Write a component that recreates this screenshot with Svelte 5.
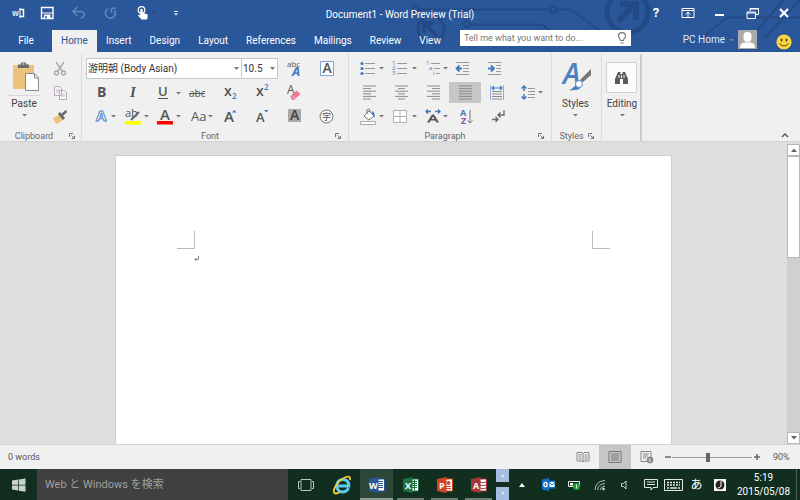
<script>
    const tabs = ["Home", "Insert", "Design", "Layout", "References", "Mailings", "Review", "View"];
    let activeTab = $state("Home");
    let search = $state("");
    let webSearch = $state("");
    let zoom = $state(90);
    let align = $state("justify");

    const apps = [
        { name: "Word", letter: "W", color: "#2b579a", active: true },
        { name: "Excel", letter: "X", color: "#1f7246" },
        { name: "PowerPoint", letter: "P", color: "#d24625" },
        { name: "Access", letter: "A", color: "#a4373a" },
    ];
</script>

{#snippet caret(x, y)}
    <path class="caret" d="M{x - 2} {y - 1}h5l-2.5 2.6z" />
{/snippet}

{#snippet launcher(label)}
    <button class="launcher" aria-label={label}>
        <svg width="6" height="6" viewBox="0 0 6 6"><path d="M.5 4V.5H4M2.3 2.3l3 3M5.5 2.8v2.7H2.8" fill="none" stroke="#777" /></svg>
    </button>
{/snippet}

{#snippet lines(x, y, widths, mode)}
    {#each widths as w, i}
        <path d="M{mode === 'right' ? x + 13 - w : mode === 'center' ? x + (13 - w) / 2 : x} {y + i * 2.6}h{w}" stroke="#8a8a8a" />
    {/each}
{/snippet}

<div class="window">
    <header>
        <svg class="circuit" width="400" height="52" viewBox="400 0 400 52" fill="none" stroke="#234a85">
            <g stroke-width="2">
                <circle cx="415.500" cy="9" r="3" />
                <path d="M419 9.500h131M557 9.500h14l30 22" />
                <circle cx="553.500" cy="9.500" r="3" />
                <circle cx="467" cy="24" r="3" />
                <path d="M470 24.500h72l8 6M700 40l27-22.500h73M757 31l26-31M765 38l35-38" />
            </g>
            <circle cx="431" cy="29" r="13" stroke-width="3" />
            <path d="M437 36l-12-12M424 33v-10h10" stroke-width="3.500" />
            <circle cx="627.500" cy="12" r="20.500" stroke-width="5" />
            <path d="M618 21l17-17M620 4h16v16" stroke-width="5.500" />
        </svg>

        <div class="titlebar">
            <div class="quick">
                <svg width="30" height="26" viewBox="0 0 30 26">
                    <path d="M16.500 9.500h4v7h-4" fill="none" stroke="#fff" stroke-width="1.500" />
                    <text x="9" y="16" font-size="8" font-weight="700" fill="#dfe8f5">w</text>
                    <path d="M17 8v10" stroke="#fff" />
                </svg>
                <button aria-label="Save">
                    <svg width="30" height="26" viewBox="0 0 30 26">
                        <path d="M8.500 7.500h11.500v11H8.500z" fill="none" stroke="#fff" stroke-width="1.400" />
                        <path d="M8.500 12.500h11.500v1H8.500zM11 14.500h6.500v4h-6.500z" fill="#fff" />
                        <path d="M13 16v2.500" stroke="#2a579a" stroke-width="1.500" />
                    </svg>
                </button>
                <button aria-label="Undo">
                    <svg width="32" height="26" viewBox="0 0 32 26" fill="none" stroke="#5f83ba" stroke-width="1.600">
                        <path d="M14.500 7l-4.500 4.500 4.500 4.500M10.500 11.500h7c5 0 5 6 0 6.500" />
                    </svg>
                </button>
                <button aria-label="Redo">
                    <svg width="32" height="26" viewBox="0 0 32 26" fill="none" stroke="#5f83ba" stroke-width="1.600">
                        <path d="M13 8.700a5 5 0 1 0 6.500 1.500M21 8.300h-4.500v4.500" />
                    </svg>
                </button>
                <button aria-label="Touch mode">
                    <svg width="32" height="26" viewBox="0 0 32 26">
                        <circle cx="14.500" cy="10" r="3.300" fill="none" stroke="#fff" stroke-width="1.200" />
                        <path d="M13.300 9.500q1.200-1.500 2.400 0V13l4 1q1.500.5 1 2.500l-.7 3h-5.500l-3.500-4q.5-1.200 2.300-.3z" fill="#fff" />
                        <path d="M25 12h4l-2 2z" fill="#37404f" />
                    </svg>
                </button>
                <button aria-label="Customize Quick Access Toolbar">
                    <svg width="32" height="26" viewBox="0 0 32 26">
                        <path d="M15 11.500h4" stroke="#fff" />
                        <path d="M15 13.500h4l-2 2z" fill="#fff" />
                    </svg>
                </button>
            </div>
            <div class="title">Document1 - Word Preview (Trial)</div>
            <div class="controls">
                <button aria-label="Help" class="help">?</button>
                <button aria-label="Ribbon Display Options">
                    <svg width="14" height="12" viewBox="0 0 14 12" fill="none" stroke="#fff">
                        <path d="M1 1.500h12v9H1zM1 3.500h12M7 10V5M4.500 7.500L7 5l2.500 2.500" />
                    </svg>
                </button>
                <button aria-label="Minimize">
                    <svg width="12" height="12" viewBox="0 0 12 12"><path d="M1 8h9" stroke="#fff" stroke-width="2" /></svg>
                </button>
                <button aria-label="Restore">
                    <svg width="13" height="13" viewBox="0 0 13 13" fill="none" stroke="#fff">
                        <path d="M4 4V1.500h8.500v6H10M1 5h8.500v6.500H1zM1 6h8.500M4 2h8.500" />
                    </svg>
                </button>
                <button aria-label="Close">
                    <svg width="12" height="12" viewBox="0 0 12 12"><path d="M2 2l8 8M10 2l-8 8" stroke="#fff" stroke-width="2.200" /></svg>
                </button>
            </div>
        </div>

        <div class="tabrow">
            <button class="tab file">File</button>
            {#each tabs as tab}
                <button class="tab" class:active={activeTab === tab} onclick={() => (activeTab = tab)}>{tab}</button>
            {/each}
            <label class="tell">
                <input type="text" placeholder="Tell me what you want to do..." aria-label="Tell me what you want to do" bind:value={search} />
                <svg width="10" height="12" viewBox="0 0 10 12" fill="none" stroke="#777" stroke-width="1.200">
                    <path d="M3.500 8.500C3.500 6.500 1.500 6 1.500 4a3.500 3.300 0 0 1 7 0c0 2-2 2.500-2 4.500zM3.500 11h3" />
                </svg>
            </label>
            <div class="account">
                <button class="user">
                    PC Home
                    <svg width="5" height="3" viewBox="0 0 5 3"><path d="M0 0h5L2.500 2.500z" fill="#6f83a5" /></svg>
                </button>
                <svg width="19" height="19" viewBox="0 0 19 19">
                    <path d="M0 0h19v19H0z" fill="#aaa" />
                    <rect x="5.500" y="2" width="8" height="10" rx="4" fill="#fff" />
                    <path d="M2 18q0-5 4-5.500h7q4 .5 4 5.500z" fill="#fff" />
                </svg>
                <button class="smile" aria-label="Send feedback">
                    <svg width="16" height="16" viewBox="0 0 16 16">
                        <circle cx="8" cy="8" r="7.600" fill="#fbd640" />
                        <ellipse cx="5.500" cy="6" rx="1" ry="1.600" fill="#4c4320" />
                        <ellipse cx="10.500" cy="6" rx="1" ry="1.600" fill="#4c4320" />
                        <path d="M3.500 9.500q4.500 5 9 0" fill="none" stroke="#4c4320" />
                    </svg>
                </button>
            </div>
        </div>
    </header>

    <section class="ribbon">
        <div class="group clipboard">
            <div class="body">
                <button class="big">
                    <svg width="32" height="39" viewBox="0 0 32 39">
                        <path d="M5 7h21v24H5z" fill="#ecc37c" />
                        <path d="M10 10V6.500h3V4.500h5v2h3V10z" fill="#6a6a6a" />
                        <circle cx="15.500" cy="6" r="1" fill="#ecc37c" />
                        <path d="M17.500 15.500h9l4 4.500v12.500h-13z" fill="#fff" stroke="#8a8a8a" />
                        <path d="M26.500 15.500V20h4" fill="none" stroke="#8a8a8a" />
                        <path d="M0 37.500h32" stroke="#d6d6d6" />
                    </svg>
                    <span>Paste</span>
                    <svg width="5" height="8" viewBox="0 0 5 8"><path class="caret" d="M0 3h5L2.500 5.600z" /></svg>
                </button>
                <div class="tools one">
                    <button aria-label="Cut">
                        <svg viewBox="0 0 32 21" fill="none" stroke="#aaa" stroke-width="1.400">
                            <path d="M12 4l6.500 9.500M20 4l-6.500 9.500" />
                            <circle cx="12.500" cy="15" r="2" /><circle cx="19.500" cy="15" r="2" />
                        </svg>
                    </button>
                    <button aria-label="Copy">
                        <svg viewBox="0 0 32 21" fill="#f7f3f8" stroke="#b9a9bd">
                            <path d="M10.500 4.500h5l2 2v7h-7zM15.500 8.500h5l2 2v7h-7z" />
                            <path d="M12 8h3M12 10h3M17 12h4M17 14h4" stroke="#c9bccd" />
                        </svg>
                    </button>
                    <button aria-label="Format Painter">
                        <svg viewBox="0 0 32 21">
                            <path d="M9 12l6-3 4 5-6 4q-2-1-4-6z" fill="#ecc37c" />
                            <path d="M14 8l2-2 5 6-2 2z" fill="#666" />
                            <path d="M18 9l4.500-4" stroke="#666" stroke-width="2.500" />
                        </svg>
                    </button>
                </div>
            </div>
            <footer><span>Clipboard</span>{@render launcher("Clipboard settings")}</footer>
        </div>

        <div class="group">
            <div class="body">
                <div class="tools eight">
                    <div class="combos">
                        <select class="family" aria-label="Font"><option>游明朝 (Body Asian)</option></select>
                        <select class="size" aria-label="Font size"><option>10.5</option></select>
                    </div>
                    <button aria-label="Phonetic Guide">
                        <svg viewBox="0 0 32 21">
                            <text x="9" y="9" font-size="8" fill="#555">abc</text>
                            <text x="14" y="18" font-size="13" font-weight="700" font-style="italic" fill="#4079bd">A</text>
                        </svg>
                    </button>
                    <button aria-label="Character Border">
                        <svg viewBox="0 0 32 21">
                            <path d="M10.500 3.500h13v14h-13z" fill="#fafcff" stroke="#7fa3cf" />
                            <text x="12.500" y="15" font-size="14" font-weight="600" fill="#555">A</text>
                        </svg>
                    </button>

                    <button aria-label="Bold"><svg viewBox="0 0 32 21"><text x="11" y="15" font-size="14" font-weight="700" fill="#555">B</text></svg></button>
                    <button aria-label="Italic"><svg viewBox="0 0 32 21"><text class="serif" x="12" y="15" font-size="15" font-weight="700" font-style="italic" fill="#555">I</text></svg></button>
                    <button aria-label="Underline">
                        <svg viewBox="0 0 32 21">
                            <text x="8" y="14" font-size="13" font-weight="600" fill="#555">U</text>
                            <path d="M8 16.500h10" stroke="#555" />
                            {@render caret(28, 11)}
                        </svg>
                    </button>
                    <button aria-label="Strikethrough">
                        <svg viewBox="0 0 32 21">
                            <text x="7" y="15" font-size="10" fill="#555">abc</text>
                            <path d="M7 11.500h16" stroke="#555" />
                        </svg>
                    </button>
                    <button aria-label="Subscript">
                        <svg viewBox="0 0 32 21">
                            <text x="10" y="14" font-size="14" font-weight="600" fill="#555">x</text>
                            <text x="18" y="17" font-size="8" font-weight="600" fill="#4079bd">2</text>
                        </svg>
                    </button>
                    <button aria-label="Superscript">
                        <svg viewBox="0 0 32 21">
                            <text x="10" y="14" font-size="14" font-weight="600" fill="#555">x</text>
                            <text x="18" y="8" font-size="8" font-weight="600" fill="#4079bd">2</text>
                        </svg>
                    </button>
                    <button aria-label="Clear Formatting">
                        <svg viewBox="0 0 32 21">
                            <text x="9" y="12" font-size="12" fill="#555">A</text>
                            <path d="M12 14.500l6.500-6 4 3.500-6.500 6h-1.500z" fill="#e8798f" />
                            <path d="M13.500 13l4 3.800" stroke="#f6c5ce" />
                        </svg>
                    </button>
                    <span></span>

                    <button aria-label="Text Effects">
                        <svg viewBox="0 0 32 21">
                            <text x="10" y="15" font-size="15" font-weight="700" fill="#fff" stroke="#4e86c6">A</text>
                            {@render caret(27, 10)}
                        </svg>
                    </button>
                    <button aria-label="Highlight Color">
                        <svg viewBox="0 0 32 21">
                            <text x="7" y="11" font-size="11" fill="#555">ab</text>
                            <path d="M13 14l8-8" stroke="#666" stroke-width="2" />
                            <path d="M7 15h16v3.500H7z" fill="#ffff00" />
                            {@render caret(28, 10)}
                        </svg>
                    </button>
                    <button aria-label="Font Color">
                        <svg viewBox="0 0 32 21">
                            <text x="10" y="14" font-size="15" font-weight="600" fill="#555">A</text>
                            <path d="M7 15h16v3.500H7z" fill="#f00" />
                            {@render caret(28, 10)}
                        </svg>
                    </button>
                    <button aria-label="Change Case">
                        <svg viewBox="0 0 32 21">
                            <text x="9" y="15" font-size="13" fill="#555">Aa</text>
                            {@render caret(28, 10)}
                        </svg>
                    </button>
                    <button aria-label="Grow Font">
                        <svg viewBox="0 0 32 21">
                            <text x="10" y="16" font-size="15" font-weight="600" fill="#555">A</text>
                            <path d="M18 6.500h4.500l-2.200-2.500z" fill="#4079bd" />
                        </svg>
                    </button>
                    <button aria-label="Shrink Font">
                        <svg viewBox="0 0 32 21">
                            <text x="10" y="16" font-size="13" font-weight="600" fill="#555">A</text>
                            <path d="M18 4h4.500l-2.200 2.500z" fill="#4079bd" />
                        </svg>
                    </button>
                    <button aria-label="Character Shading">
                        <svg viewBox="0 0 32 21">
                            <path d="M10 3h13v13H10z" fill="#a9a9a9" />
                            <text x="12" y="14" font-size="14" font-weight="600" fill="#444">A</text>
                        </svg>
                    </button>
                    <button aria-label="Enclose Characters">
                        <svg viewBox="0 0 32 21">
                            <circle cx="16.500" cy="10.500" r="6.500" fill="#fafafa" stroke="#777" />
                            <text x="12" y="14" font-size="9" fill="#555">字</text>
                        </svg>
                    </button>
                </div>
            </div>
            <footer><span>Font</span>{@render launcher("Font settings")}</footer>
        </div>

        <div class="group">
            <div class="body">
                <div class="tools six">
                    <button aria-label="Bullets">
                        <svg viewBox="0 0 32 21">
                            <g fill="#4079bd"><circle cx="9" cy="5.500" r="1.600" /><circle cx="9" cy="10.500" r="1.600" /><circle cx="9" cy="15.500" r="1.600" /></g>
                            <path d="M12 5.500h10M12 10.500h10M12 15.500h10" stroke="#999" />
                            {@render caret(28, 10)}
                        </svg>
                    </button>
                    <button aria-label="Numbering">
                        <svg viewBox="0 0 32 21">
                            <g fill="#4079bd" font-size="6"><text x="7" y="7">1</text><text x="7" y="12">2</text><text x="7" y="17">3</text></g>
                            <path d="M12 5.500h10M12 10.500h10M12 15.500h10" stroke="#999" />
                            {@render caret(29, 10)}
                        </svg>
                    </button>
                    <button aria-label="Multilevel List">
                        <svg viewBox="0 0 32 21">
                            <g fill="#4079bd" font-size="6"><text x="9" y="7">1</text><text x="12" y="12">a</text><text x="16" y="17">i</text></g>
                            <path d="M14 5.500h9M17 10.500h6M19 15.500h4" stroke="#999" />
                            {@render caret(28, 10)}
                        </svg>
                    </button>
                    <button aria-label="Decrease Indent">
                        <svg viewBox="0 0 32 21">
                            <path d="M7 4.500h13M14 7.500h6M14 10.500h6M14 13.500h6M7 16.500h13" stroke="#999" />
                            <path d="M13 10.500H8M10.500 7.500l-3 3 3 3" fill="none" stroke="#4079bd" stroke-width="1.800" />
                        </svg>
                    </button>
                    <button aria-label="Increase Indent">
                        <svg viewBox="0 0 32 21">
                            <path d="M7 4.500h13M15 7.500h5M15 10.500h5M15 13.500h5M7 16.500h13" stroke="#999" />
                            <path d="M7 10.500h5M10 7.500l3 3-3 3" fill="none" stroke="#4079bd" stroke-width="1.800" />
                        </svg>
                    </button>
                    <span></span>

                    <button aria-label="Align Left" class:on={align === "left"} onclick={() => (align = "left")}>
                        <svg viewBox="0 0 32 21">{@render lines(10, 4, [13, 8, 13, 8, 13, 8], "left")}</svg>
                    </button>
                    <button aria-label="Center" class:on={align === "center"} onclick={() => (align = "center")}>
                        <svg viewBox="0 0 32 21">{@render lines(10, 4, [13, 7, 13, 7, 13, 7], "center")}</svg>
                    </button>
                    <button aria-label="Align Right" class:on={align === "right"} onclick={() => (align = "right")}>
                        <svg viewBox="0 0 32 21">{@render lines(10, 4, [13, 8, 13, 8, 13, 8], "right")}</svg>
                    </button>
                    <button aria-label="Justify" class:on={align === "justify"} onclick={() => (align = "justify")}>
                        <svg viewBox="0 0 32 21">{@render lines(10, 4, [13, 13, 13, 13, 13, 13], "left")}</svg>
                    </button>
                    <button aria-label="Distributed">
                        <svg viewBox="0 0 32 21">
                            <path d="M9.500 3v15M22.500 3v15" stroke="#8fb2dc" />
                            <path d="M11 6h10M13 4l-2 2 2 2M19 4l2 2-2 2" fill="none" stroke="#4079bd" stroke-width="1.200" />
                            <path d="M11 9.500h10M11 12h10M11 14.500h10M11 17h10" stroke="#8a8a8a" />
                        </svg>
                    </button>
                    <button aria-label="Line Spacing">
                        <svg viewBox="0 0 32 21">
                            <path d="M11 4v5M11 12v5M8.500 6.500L11 4l2.500 2.500M8.500 14.500L11 17l2.500-2.500" fill="none" stroke="#4079bd" stroke-width="1.500" />
                            <path d="M15 6.500h7M15 9.500h7M15 12.500h7M15 15.500h7" stroke="#999" />
                            {@render caret(27, 10)}
                        </svg>
                    </button>

                    <button aria-label="Shading">
                        <svg viewBox="0 0 32 21">
                            <path d="M11 10l5-5 5 5-5 4z" fill="#fff" stroke="#777" />
                            <path d="M14 8V4q1.500-2 3 0v2" fill="none" stroke="#777" />
                            <path d="M19 5q3 1 3 7-1-3-3-4z" fill="#4079bd" />
                            <path d="M7.500 15.500h15v3h-15z" fill="#fff" stroke="#aaa" />
                            {@render caret(28, 10)}
                        </svg>
                    </button>
                    <button aria-label="Borders">
                        <svg viewBox="0 0 32 21">
                            <path d="M8.500 4.500h13v12h-13zM15 4.500v12M8.500 10.500h13" fill="#fff" stroke="#b0b0b0" />
                            {@render caret(29, 10)}
                        </svg>
                    </button>
                    <button aria-label="Asian Layout">
                        <svg viewBox="0 0 32 21">
                            <path d="M9 5.500h5M11 3.500l-2 2 2 2M18 5.500h5M21 3.500l2 2-2 2" fill="none" stroke="#4079bd" stroke-width="1.300" />
                            <path d="M10 16.500h2.500l1.300-2h4.400l1.300 2H22l-5-8h-2zM14.700 13l1.300-2.500 1.300 2.500z" fill="#555" />
                            {@render caret(28, 10)}
                        </svg>
                    </button>
                    <button aria-label="Sort">
                        <svg viewBox="0 0 32 21">
                            <text x="11" y="10" font-size="9" font-weight="700" fill="#4079bd">A</text>
                            <text x="12" y="18" font-size="9" font-weight="700" fill="#8a53ad">Z</text>
                            <path d="M21 4v13M18.500 14.500L21 17l2.500-2.500" fill="none" stroke="#777" />
                        </svg>
                    </button>
                    <button aria-label="Show Marks">
                        <svg viewBox="0 0 32 21" fill="none" stroke="#666" stroke-width="1.300">
                            <path d="M23 4v5h-6M19.500 6.500L17 9l2.500 2.500M11 13.500h6M14.500 11l2.500 2.500-2.500 2.500" />
                        </svg>
                    </button>
                </div>
            </div>
            <footer><span>Paragraph</span>{@render launcher("Paragraph settings")}</footer>
        </div>

        <div class="group styles">
            <div class="body">
                <button class="big">
                    <svg width="32" height="39" viewBox="0 0 32 39">
                        <text x="3" y="26" font-size="29" font-weight="600" font-style="italic" fill="#4a82bd">A</text>
                        <path d="M9 32q5-2 7-6l5 3q-2 4-12 3z" fill="#4a82bd" />
                        <circle cx="19" cy="26" r="3.500" fill="#fff" stroke="#5b8cc4" />
                        <path d="M20 22l11-11v6l-8 7z" fill="#747474" />
                    </svg>
                    <span>Styles</span>
                    <svg width="5" height="8" viewBox="0 0 5 8"><path class="caret" d="M0 3h5L2.500 5.600z" /></svg>
                </button>
            </div>
            <footer><span>Styles</span>{@render launcher("Styles settings")}</footer>
        </div>

        <div class="group editing">
            <div class="body">
                <button class="big">
                    <svg width="32" height="39" viewBox="0 0 32 39">
                        <path d="M.5 4.500h30v30H.5z" fill="#fcfcfc" stroke="#d0d0d0" />
                        <path d="M9 26v-5l3-7h2.500v2h2v-2H19l3 7v5h-5v-5h-3v5z" fill="#5c5c5c" />
                        <path d="M13 17v3M18 17v3M15.500 17v3" stroke="#fcfcfc" />
                    </svg>
                    <span>Editing</span>
                    <svg width="5" height="8" viewBox="0 0 5 8"><path class="caret" d="M0 3h5L2.500 5.600z" /></svg>
                </button>
            </div>
        </div>

        <button class="collapse" aria-label="Collapse the Ribbon">
            <svg width="8" height="6" viewBox="0 0 8 6"><path d="M1 5l3-3 3 3" fill="none" stroke="#555" stroke-width="1.400" /></svg>
        </button>
    </section>

    <main>
        <div class="desk">
            <article>
                <div class="margins">
                    <svg width="18" height="18" viewBox="0 0 18 18"><path d="M17.500 0v17.500H0" fill="none" stroke="#bbb" /></svg>
                    <svg width="18" height="18" viewBox="0 0 18 18"><path d="M.5 0v17.500H18" fill="none" stroke="#bbb" /></svg>
                </div>
                <div class="para">
                    <svg width="6" height="6" viewBox="0 0 6 6"><path d="M4.500 0v3.500H1M2.500 2L1 3.500 2.500 5" fill="none" stroke="#888" /></svg>
                </div>
            </article>
        </div>
        <div class="scroll">
            <button aria-label="Scroll up"><svg width="6" height="4" viewBox="0 0 6 4"><path d="M0 4h6L3 .5z" fill="#666" /></svg></button>
            <div class="track"><div class="thumb"></div></div>
            <button aria-label="Scroll down"><svg width="6" height="4" viewBox="0 0 6 4"><path d="M0 0h6L3 3.500z" fill="#666" /></svg></button>
        </div>
    </main>

    <div class="status">
        <span class="words">0 words</span>
        <button aria-label="Read Mode">
            <svg width="14" height="12" viewBox="0 0 14 12" fill="none" stroke="#888">
                <path d="M1 1.500h5l1 1 1-1h5v8.500H8l-1 1-1-1H1zM7 2v9M2.500 4h3M2.500 6h3M2.500 8h3M8.500 4h3M8.500 6h3M8.500 8h3" />
            </svg>
        </button>
        <button class="on" aria-label="Print Layout">
            <svg width="14" height="12" viewBox="0 0 14 12" fill="none" stroke="#777">
                <path d="M1 .5h12v11H1zM3 3h8M3 5h8M3 7h8M3 9h8" />
            </svg>
        </button>
        <button aria-label="Web Layout">
            <svg width="14" height="13" viewBox="0 0 14 13" fill="none" stroke="#888">
                <path d="M7 10.500H1V.5h10V6M3 3h6M3 5h5M3 7h3" />
                <circle cx="10" cy="9" r="3" fill="#888" /><path d="M8.500 8l2 1-1 2" stroke="#eee" />
            </svg>
        </button>
        <div class="zoom">
            <button aria-label="Zoom out" onclick={() => (zoom -= 10)}><svg width="8" height="8" viewBox="0 0 8 8"><path d="M1 4h6" stroke="#666" stroke-width="1.500" /></svg></button>
            <input type="range" min="10" max="190" aria-label="Zoom" bind:value={zoom} />
            <button aria-label="Zoom in" onclick={() => (zoom += 10)}><svg width="8" height="8" viewBox="0 0 8 8"><path d="M1 4h6M4 1v6" stroke="#666" stroke-width="1.500" /></svg></button>
            <span>{zoom}%</span>
        </div>
    </div>

    <nav class="taskbar">
        <button class="start" aria-label="Start">
            <svg width="14" height="14" viewBox="0 0 14 14" fill="#c9d3cc"><path d="M0 2.500l6-.9v5.200H0zM6.700 1.500L13.500.5v6.300H6.700zM0 7.500h6v5l-6-.9zM6.700 7.500h6.800v6.300l-6.800-1z" /></svg>
        </button>
        <input type="text" placeholder="Web と Windows を検索" aria-label="Web と Windows を検索" bind:value={webSearch} />
        <button class="app" aria-label="Task View">
            <svg width="16" height="12" viewBox="0 0 16 12" fill="none" stroke="#b8c4bc"><path d="M3 .5h10v11H3zM2 2.500H.5v7H2M14 2.500h1.500v7H14" /></svg>
        </button>
        <button class="app" aria-label="Internet Explorer">
            <svg width="20" height="20" viewBox="0 0 20 20" fill="none">
                <path d="M16.500 13q-2 4-6 4c-7.500 0-7.500-12.500 0-12.500 4 0 6.300 2.500 6.300 6.500H6.500" stroke="#5fcbf4" stroke-width="3" />
                <path d="M3.500 18.500C-1.500 18 5 5 14 2q5-1.500 4 3M3.500 18.500q2 .2 4-1.500" stroke="#f3cf35" stroke-width="1.800" />
            </svg>
        </button>
        {#each apps as app}
            <button class="app office" class:current={app.active} aria-label={app.name}>
                <svg width="18" height="18" viewBox="0 0 18 18">
                    <path d="M9 3h7.500v12H9z" fill="#fff" stroke={app.color} />
                    {#if app.letter === "W"}
                        <path d="M10 5.500h5M10 7.500h5M10 9.500h5M10 11.500h5" stroke={app.color} />
                    {:else if app.letter === "X"}
                        <path d="M10 5.500h5M10 7.500h5M10 9.500h5M10 11.500h5M12.500 4v10" stroke={app.color} />
                    {:else if app.letter === "P"}
                        <path d="M10 10.500h5M10 12.500h5" stroke={app.color} />
                        <circle cx="12.500" cy="7" r="2" fill={app.color} />
                    {:else}
                        <path d="M10 6q3 1.500 6 0M10 9q3 1.500 6 0M10 12q3 1.500 6 0" fill="none" stroke={app.color} />
                    {/if}
                    <path d="M1 3l9.500-2v16L1 15z" fill={app.color} />
                    <text x={app.letter === "W" ? 1 : 3} y="12.500" font-size="9" font-weight="700" fill="#fff">{app.letter}</text>
                </svg>
            </button>
        {/each}
        <div class="pager">
            <button aria-label="Previous"><svg width="4" height="3" viewBox="0 0 4 3"><path d="M0 3h4L2 0z" fill="#d7e5fb" /></svg></button>
            <button aria-label="Next"><svg width="4" height="3" viewBox="0 0 4 3"><path d="M0 0h4L2 3z" fill="#d7e5fb" /></svg></button>
        </div>
        <div class="tray">
            <button aria-label="Show hidden icons"><svg width="6" height="4" viewBox="0 0 6 4"><path d="M0 4h6L3 0z" fill="#fff" /></svg></button>
            <button aria-label="Outlook">
                <svg width="13" height="13" viewBox="0 0 13 13">
                    <path d="M0 1.500L7 0v13l-7-1.500zM7 2.500h6v8H7z" fill="#0f72c8" />
                    <path d="M7.500 4h5v5h-5z" fill="#fff" /><path d="M7.500 4.500L10 7l2.500-2.500" fill="none" stroke="#0f72c8" />
                    <ellipse cx="3.500" cy="6.500" rx="1.600" ry="2.200" fill="none" stroke="#fff" stroke-width="1.300" />
                </svg>
            </button>
            <button aria-label="Battery">
                <svg width="14" height="12" viewBox="0 0 14 12">
                    <path d="M1.500 2.500h11v5h-11z" fill="none" stroke="#e4e9e5" /><path d="M3 4h3v2.500H3z" fill="#fff" />
                    <circle cx="9.500" cy="7.500" r="3.500" fill="#1ca332" /><path d="M9.500 5.500v4" stroke="#d6f3da" />
                </svg>
            </button>
            <button aria-label="Network">
                <svg width="12" height="12" viewBox="0 0 12 12" fill="none" stroke="#aeb9b1"><path d="M1 11Q1.500 2 11 1.500M3.500 11Q4 5 11 4.500M6 11q.5-3.500 5-4" /><circle cx="9.500" cy="10" r="1" fill="#fff" /></svg>
            </button>
            <button aria-label="Volume">
                <svg width="12" height="12" viewBox="0 0 12 12" fill="none" stroke="#cfd6d1"><path d="M1.500 4.500h2l2.500-2.500v8l-2.500-2.500h-2z" /></svg>
            </button>
            <button class="tight" aria-label="Action Center">
                <svg width="14" height="13" viewBox="0 0 14 13" fill="none" stroke="#e4e9e5"><path d="M.5 1.500h13v8H9l-2 2.500v-2.500H.5zM3 4h8M3 6.500h8" /></svg>
            </button>
            <button class="tight" aria-label="Touch keyboard">
                <svg width="19" height="12" viewBox="0 0 19 12" fill="none" stroke="#e4e9e5">
                    <path d="M.5.5h18v11H.5z" /><path d="M3 3.500h13M3 6h13" stroke-dasharray="2 1" stroke-width="1.500" /><path d="M3 9h2M6 9h7M14 9h2" stroke-width="1.500" />
                </svg>
            </button>
            <button class="tight ime">あ</button>
            <button class="tight" aria-label="Input method">
                <svg width="12" height="12" viewBox="0 0 12 12"><path d="M0 0h12v12H0z" fill="#fff" /><circle cx="6" cy="6" r="4.500" fill="#222" /><path d="M7 2v5q-.5 2-3 2" fill="none" stroke="#fff" /></svg>
            </button>
        </div>
        <button class="clock"><span>5:19</span><span>2015/05/08</span></button>
        <button class="peek" aria-label="Show desktop"></button>
    </nav>
</div>

<style>
    :global(body) {
        margin: 0;
    }

    .window {
        display: flex;
        flex-direction: column;
        height: 100vh;
        overflow: hidden;
        background: #f0f0f0;
        font: 10px/14px Roboto, "Noto Sans CJK JP", sans-serif;
        color: #444;
    }

    button {
        display: flex;
        align-items: center;
        justify-content: center;
        padding: 0;
        border: 0;
        background: none;
        color: inherit;
        font: inherit;
        white-space: nowrap;
    }

    input,
    select {
        box-sizing: border-box;
        margin: 0;
        font: inherit;
        color: inherit;
        outline: 0;
    }

    svg {
        display: block;
        flex: none;
        overflow: visible;
    }

    text {
        font-family: "Open Sans", "Noto Sans CJK JP", sans-serif;
    }

    .caret {
        fill: #777;
    }

    .serif {
        font-family: "Liberation Serif", serif;
    }

    /* title bar and tabs */
    header {
        position: relative;
        background: #2a579a;
        color: #fff;
    }

    .circuit {
        position: absolute;
        top: 0;
        right: 0;
        overflow: hidden;
    }

    .titlebar {
        position: relative;
        display: grid;
        grid-template-columns: 1fr auto 1fr;
        height: 30px;
    }

    .quick {
        display: flex;
        align-items: flex-start;
        padding-left: 3px;
    }

    .title {
        line-height: 30px;
    }

    .controls {
        display: flex;
        justify-content: flex-end;
    }

    .controls button {
        width: 32px;
        height: 26px;
    }

    .controls .help {
        font-size: 13px;
        font-weight: 700;
    }

    .tabrow {
        position: relative;
        display: flex;
        height: 22px;
    }

    .tab {
        padding: 0 9px;
        height: 22px;
    }

    .file {
        width: 52px;
    }

    .active {
        background: #f0f0f0;
        color: #2a579a;
    }

    .tell {
        display: flex;
        flex: 0 1 171px;
        align-items: center;
        box-sizing: border-box;
        height: 16px;
        margin-left: 10px;
        padding-right: 4px;
        background: #fff;
    }

    .tell input {
        flex: 1;
        min-width: 0;
        height: 16px;
        padding: 0 4px;
        border: 0;
        background: none;
        color: #444;
        font-size: 9px;
    }

    .tell input::placeholder {
        color: #777;
        opacity: 1;
    }

    .account {
        display: flex;
        align-items: flex-start;
        margin-left: auto;
        padding-right: 8px;
    }

    .user {
        gap: 4px;
        height: 20px;
        margin-right: 4px;
        color: #dfe8f5;
    }

    .smile {
        margin: 4px 0 0 19px;
    }

    /* ribbon */
    .ribbon {
        display: flex;
        height: 90px;
        border-bottom: 1px solid #d2d2d2;
        box-sizing: border-box;
    }

    .group {
        display: flex;
        flex-direction: column;
        justify-content: space-between;
        box-sizing: border-box;
        margin: 2px 0 0;
        padding: 4px 6px 0 4px;
        border-right: 1px solid #dadada;
    }

    .body {
        display: flex;
    }

    .clipboard {
        padding: 4px 5px 0 0;
    }

    .styles {
        width: 50px;
    }

    .editing {
        width: 40px;
        padding-right: 2px;
        border-right: 2px solid #ccc;
    }

    .group footer {
        display: flex;
        align-items: center;
        height: 10px;
        color: #666;
        font-size: 9px;
        line-height: 10px;
    }

    .group footer span {
        flex: 1;
        text-align: center;
    }

    .big {
        flex-direction: column;
        justify-content: flex-start;
        width: 100%;
    }

    .clipboard .big {
        width: 48px;
    }

    .big span {
        line-height: 14px;
    }

    .tools {
        display: grid;
        grid-auto-rows: 21px;
        row-gap: 3px;
    }

    .tools svg {
        width: 32px;
        height: 21px;
    }

    .one {
        grid-template-columns: 28px;
    }

    .one button {
        width: 24px;
    }

    .eight {
        grid-template-columns: repeat(8, 32px);
    }

    .six {
        grid-template-columns: repeat(6, 32px);
    }

    .combos {
        display: flex;
        grid-column: span 6;
    }

    select {
        height: 21px;
        padding: 0 1px;
        border: 1px solid #c6c6c6;
        border-radius: 0;
        appearance: none;
        background: #fff url("data:image/svg+xml,%3Csvg xmlns='http://www.w3.org/2000/svg' width='5' height='3'%3E%3Cpath d='M0 0h5L2.500 3z' fill='%23777'/%3E%3C/svg%3E") no-repeat right 2px center;
        color: #333;
    }

    .family {
        flex: 1;
    }

    .size {
        width: 37px;
        margin-left: -1px;
    }

    .on {
        background: #c6c6c6;
    }

    .launcher {
        width: 8px;
        height: 10px;
    }

    .collapse {
        align-self: flex-end;
        margin: 0 11px 3px auto;
    }

    /* document */
    main {
        display: flex;
        flex: 1;
        min-height: 0;
        background: #dededd;
    }

    .desk {
        display: flex;
        flex: 1;
        justify-content: center;
        padding-top: 13px;
    }

    article {
        box-sizing: border-box;
        width: 557px;
        padding: 75px 61px 0;
        border: 1px solid #cfcfcf;
        border-bottom: 0;
        background: #fff;
    }

    .margins {
        display: flex;
        justify-content: space-between;
    }

    .para {
        padding: 7px 0 0 17px;
    }

    .scroll {
        display: flex;
        flex-direction: column;
        width: 13px;
        padding-top: 2px;
    }

    .scroll button,
    .thumb {
        box-sizing: border-box;
        height: 12px;
        border: 1px solid #b8b8b8;
        background: #fff;
    }

    .track {
        flex: 1;
        background: #d0d0cf;
    }

    .thumb {
        height: 37%;
    }

    /* status bar */
    .status {
        display: flex;
        align-items: stretch;
        height: 25px;
        border-top: 1px solid #d2d2d2;
        box-sizing: border-box;
        color: #555;
        font-size: 9px;
    }

    .words {
        margin: auto auto auto 8px;
    }

    .status > button {
        width: 32px;
    }

    .zoom {
        display: flex;
        align-items: center;
        width: 137px;
    }

    .zoom button {
        margin-left: 1px;
    }

    .zoom span {
        margin-left: 12px;
    }

    input[type="range"] {
        width: 80px;
        height: 12px;
        appearance: none;
        background: linear-gradient(#999, #999) center / 100% 1px no-repeat;
    }

    input[type="range"]::-webkit-slider-thumb {
        appearance: none;
        width: 4px;
        height: 9px;
        background: #666;
    }

    /* taskbar */
    .taskbar {
        display: flex;
        height: 31px;
        background: #112e1f;
        color: #fff;
    }

    .start {
        width: 37px;
    }

    .taskbar input {
        flex: 0 1 251px;
        min-width: 0;
        padding: 0 8px;
        border: 0;
        background: #404040;
        color: #fff;
        font-size: 11px;
    }

    .taskbar input::placeholder {
        color: #a0a0a0;
        opacity: 1;
    }

    .app {
        width: 36px;
    }

    .office {
        width: 33px;
        margin-right: 1px;
        background: linear-gradient(#6f7d74, #6f7d74) center bottom / 27px 2px no-repeat;
    }

    .current {
        background: linear-gradient(#8f9c94, #8f9c94) center bottom / 100% 2px no-repeat #2c4637;
    }

    .pager {
        display: flex;
        flex-direction: column;
        justify-content: space-between;
        width: 13px;
    }

    .pager button {
        height: 13px;
        background: #a5bde0;
    }

    .tray {
        display: flex;
    }

    .tray button {
        width: 26px;
    }

    .tray .tight {
        width: 23px;
    }

    .ime {
        font-size: 12px;
    }

    .clock {
        flex: 1;
        flex-direction: column;
    }

    .peek {
        width: 4px;
        border-left: 1px solid #4d6356;
    }
</style>
